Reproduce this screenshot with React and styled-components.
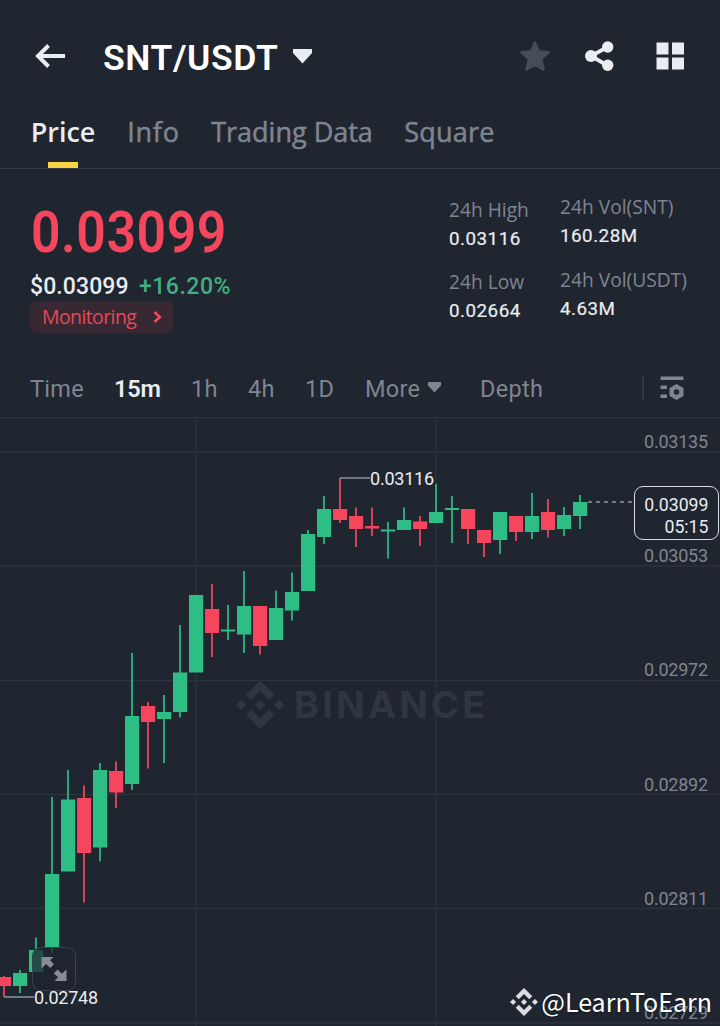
/* 코인 상세 화면
 가격 정보 + 캔들 차트 */

import React from "react";
import styled, { createGlobalStyle } from "styled-components";

const GlobalStyle = createGlobalStyle`
  :root {
    --bg-color: #1f2630;
    --line-color: #2c333d;
    --white-color: #eaecf2;
    --gray-color: #7f8590;
    --red-color: #f6465d;
    --green-color: #2ebd85;
    --point-color: #f5d342;
  }

  * {
    box-sizing: border-box;
  }

  body {
    margin: 0;
    background: var(--bg-color);
    color: var(--white-color);
    font-family: Roboto, "Liberation Sans", sans-serif;
  }
`;

const Page = styled.div`
  width: 720px;
  height: 1026px;
  overflow: hidden;
  display: flex;
  flex-direction: column;
  background: var(--bg-color);
`;

const Header = styled.header`
  height: 112px;
  padding: 0 36px 0 35px;
  display: flex;
  align-items: center;
`;

const Title = styled.h1`
  margin: 3px 14px 0 38px;
  width: 176px;
  font-size: 35.5px;
  font-weight: 600;
  line-height: 40px;
  letter-spacing: 0.6px;
  white-space: nowrap;
  color: #fff;
`;

const HeaderIcons = styled.div`
  margin-left: auto;
  display: grid;
  grid-template-columns: 65px 71px 28px;
  align-items: center;
`;

const Tabs = styled.nav`
  height: 57px;
  padding-left: 31px;
  display: flex;
  gap: 32px;
  border-bottom: 1px solid #343b45;
`;

const Tab = styled.div`
  width: ${props => props.$width}px;
  display: flex;
  flex-direction: column;
  align-items: center;
  justify-content: space-between;
  font-family: "Open Sans", sans-serif;
  font-size: 27px;
  font-weight: ${props => (props.$active ? 600 : 400)};
  line-height: 40px;
  letter-spacing: ${props => props.$spacing || 0}px;
  white-space: nowrap;
  color: ${props => (props.$active ? "var(--white-color)" : "var(--gray-color)")};
  -webkit-text-stroke: ${props => (props.$active ? 0 : 0.5)}px currentColor;

  &::after {
    content: "";
    width: 30px;
    height: 6px;
    background: ${props => (props.$active ? "var(--point-color)" : "transparent")};
  }
`;

const Summary = styled.section`
  height: 190px;
  display: flex;
`;

const PriceBox = styled.div`
  width: 449px;
  padding: 31px 0 0 31px;
  display: flex;
  flex-direction: column;
  align-items: flex-start;
`;

const Price = styled.div`
  height: 66px;
  line-height: 66px;
  font-size: 57.5px;
  font-weight: 600;
  letter-spacing: 0.6px;
  color: var(--red-color);
  transform: scaleX(0.9);
  transform-origin: left;
`;

const SubPrice = styled.div`
  display: flex;
  gap: 11px;
  height: 35px;
  margin-left: -1px;
  line-height: 41px;
  font-size: 23px;
  font-weight: 500;
  white-space: nowrap;

  span {
    width: 98px;
    letter-spacing: 0.1px;
  }
  span + span {
    color: #3fae80;
    letter-spacing: 0.5px;
  }
`;

const Badge = styled.div`
  width: 143px;
  height: 32px;
  margin-left: -1px;
  padding: 0 11px 1px 12px;
  display: flex;
  align-items: center;
  justify-content: space-between;
  border-radius: 7px;
  background: #372831;
  color: #e5485d;
  font-family: "Open Sans", sans-serif;
  font-size: 19.5px;
  letter-spacing: -0.6px;
`;

const Stats = styled.div`
  width: ${props => props.$width}px;
  padding-top: ${props => props.$top}px;
  display: flex;
  flex-direction: column;
`;

const Stat = styled.dl`
  margin: 0;
  height: ${props => props.$height || 72}px;
  white-space: nowrap;

  dt {
    height: 28px;
    line-height: 28px;
    font-family: "Open Sans", sans-serif;
    font-size: 19.2px;
    color: var(--gray-color);
  }
  dd {
    margin: 0;
    line-height: 30px;
    font-size: 18.8px;
    letter-spacing: 0.5px;
    -webkit-text-stroke: 0.2px currentColor;
  }
`;

const Periods = styled.div`
  height: 59px;
  padding: 0 36px 0 30px;
  display: flex;
  align-items: center;
  border-bottom: 1px solid var(--line-color);
`;

const Period = styled.div`
  width: ${props => props.$width}px;
  padding-top: 2px;
  display: flex;
  align-items: center;
  gap: 8px;
  font-size: 23.5px;
  font-weight: ${props => (props.$active ? 600 : 400)};
  letter-spacing: ${props => (props.$active ? -0.2 : 0.3)}px;
  color: ${props => (props.$active ? "var(--white-color)" : "var(--gray-color)")};

  svg {
    margin-bottom: 3px;
  }
`;

const Setting = styled.div`
  margin-left: auto;
  height: 25px;
  padding-left: 16px;
  display: flex;
  align-items: center;
  border-left: 2px solid #303741;
`;

const ChartWrap = styled.main`
  position: relative;
  flex: 1;

  > svg {
    display: block;
  }
`;

const PriceTag = styled.div`
  position: absolute;
  top: 68px;
  right: 1px;
  width: 85px;
  height: 54px;
  padding: 7px 9.5px 0 0;
  border: 1.5px solid #d5d9e0;
  border-radius: 9px;
  background: var(--bg-color);
  text-align: right;
  font-size: 17.7px;
  line-height: 22px;
`;

const ExpandButton = styled.button`
  position: absolute;
  left: 32px;
  top: 529px;
  width: 44px;
  height: 44px;
  padding: 0;
  display: flex;
  align-items: center;
  justify-content: center;
  border: 1.5px solid #3b424c;
  border-radius: 9px;
  background: rgba(31, 38, 48, 0.75);
`;

const Author = styled.div`
  position: absolute;
  right: 8px;
  bottom: 7px;
  display: flex;
  align-items: center;
  gap: 3px;
  font-family: "Noto Sans CJK SC", sans-serif;
  font-size: 25px;
  line-height: 36px;
  color: #fff;
  text-shadow: 0 1px 2px rgba(0, 0, 0, 0.5);

  svg {
    margin-top: 2px;
  }
`;

// [몸통 위, 몸통 아래, 고가, 저가, 상승 여부]
const candles = [
  [977, 986, 976, 997, 0],
  [973, 986, 970, 993, 1],
  [950, 972, 937.5, 972, 1],
  [874, 947, 797, 953, 1],
  [799.5, 871.5, 770, 871, 1],
  [798, 853, 785.5, 902.5, 0],
  [770, 847.5, 763, 861.5, 1],
  [771, 792.5, 761.5, 808, 0],
  [716, 784, 653, 790, 1],
  [706, 722, 702, 768.5, 0],
  [712, 719, 695, 763, 1],
  [672.5, 712, 625, 717.5, 1],
  [595, 672.5, 595, 672, 1],
  [609, 633, 584, 657, 0],
  [629.5, 631.5, 605, 640, 1],
  [606, 634.5, 571, 653, 1],
  [606, 646, 606, 654.5, 0],
  [608, 640, 590.5, 640, 1],
  [592, 610.5, 572.5, 620.5, 1],
  [534, 591, 530, 591, 1],
  [509, 537, 496, 544, 1],
  [509, 520, 478, 523, 0],
  [516, 529, 507.5, 547, 0],
  [526, 528.5, 507.5, 536, 0],
  [529.5, 531.5, 522, 558.5, 1],
  [520, 530, 507.5, 530, 1],
  [521.5, 529, 516, 546, 0],
  [512, 523, 484, 523, 1],
  [508, 510, 496, 543, 1],
  [509, 529, 509, 544, 0],
  [530, 543, 530, 557, 0],
  [512, 540, 512, 554, 1],
  [516, 532, 516, 541, 0],
  [516, 532, 493, 539, 1],
  [512, 530, 499, 537.5, 0],
  [515, 529, 507, 536, 1],
  [502, 516, 495, 529, 1],
];

// [가격, 글자 y, 선 y]
const axis = [
  ["0.03135", 448, 452],
  ["0.03053", 562, 566],
  ["0.02972", 676, 680.5],
  ["0.02892", 791, 794.5],
  ["0.02811", 905, 908.5],
  ["0.02729", 1019, 1023],
];

const AxisText = styled.text`
  font-size: 18px;
  fill: ${props => (props.$light ? "var(--white-color)" : "#7f8590")};
`;

const BrandText = styled.text`
  font-family: Inter, sans-serif;
  font-size: 37.5px;
  font-weight: 700;
  fill: #2f3640;
`;

/* 다이아몬드 로고, 24x24 */
const LogoPath = () => (
  <path d="M12 0 19.1 7.1 16.5 9.7 12 5.2 7.5 9.7 4.9 7.1ZM2.6 9.4 5.2 12 2.6 14.6 0 12ZM12 9.4 14.6 12 12 14.6 9.4 12ZM21.4 9.4 24 12 21.4 14.6 18.8 12ZM7.5 14.3 12 18.8 16.5 14.3 19.1 16.9 12 24 4.9 16.9Z" />
);

const Candle = ({ x, item }) => {
  const [top, bottom, high, low, up] = item;
  const color = up ? "var(--green-color)" : "var(--red-color)";
  return (
    <g fill={color}>
      <rect x={x - 1} y={high} width="2" height={low - high} opacity="0.85" />
      <rect x={x - 7} y={top} width="14.2" height={bottom - top} />
    </g>
  );
};

const Chart = () => (
  <svg width="720" height="608" viewBox="0 418 720 608">
    <g stroke="#2c333d" strokeWidth="1.3">
      {axis.map(([label, , y]) => (
        <line key={label} x1="0" x2="720" y1={y} y2={y} />
      ))}
      <line x1="196" x2="196" y1="418" y2="1026" />
      <line x1="436" x2="436" y1="418" y2="1026" />
    </g>
    <g transform="translate(236 680.5) scale(2.02)" fill="#2f3640">
      <LogoPath />
    </g>
    <BrandText x="294" y="718" textLength="191">
      BINANCE
    </BrandText>
    {candles.map((item, k) => (
      <Candle key={k} x={4 + k * 16} item={item} />
    ))}
    {axis.map(([label, y]) => (
      <AxisText key={label} x="644" y={y} textLength="64">
        {label}
      </AxisText>
    ))}
    <path d="M340 478H370M4 997H34" stroke="#8d939d" strokeWidth="1.5" />
    <AxisText $light x="370" y="485" textLength="64">
      0.03116
    </AxisText>
    <AxisText $light x="34" y="1004" textLength="64">
      0.02748
    </AxisText>
    <path d="M588 502H634" stroke="#9297a0" strokeWidth="1.5" strokeDasharray="4 4" />
  </svg>
);

const App = () => {
  return (
    <Page>
      <GlobalStyle />
      <Header>
        <svg width="30" height="26" viewBox="0 0 30 26" fill="none" stroke="#eaecf2" strokeWidth="4">
          <path d="M30 13H3M13.5 2.5 3 13 13.5 23.5" />
        </svg>
        <Title>SNT/USDT</Title>
        <svg width="19" height="15" viewBox="0 0 19 15" fill="#eaecf2">
          <path d="M0 0H19V4L9.5 14.5 0 4Z" />
        </svg>
        <HeaderIcons>
          <svg width="30" height="30" viewBox="0 0 30 30" fill="#474d58">
            <path
              d="M15 1.5 18.8 10.4 28.6 11.3 21.2 17.8 23.6 28.6 15 23.8 6.4 28.6 8.8 17.8 1.4 11.3 11.2 10.4Z"
              stroke="#474d58"
              strokeWidth="2.4"
              strokeLinejoin="round"
            />
          </svg>
          <svg width="30" height="30" viewBox="0 0 30 30" fill="#eaecf2">
            <path d="M22.5 6 6 15 22.5 24.5" fill="none" stroke="#eaecf2" strokeWidth="3.8" />
            <circle cx="22.7" cy="6" r="5.7" />
            <circle cx="6" cy="15" r="6" />
            <circle cx="22.7" cy="24.3" r="5.7" />
          </svg>
          <svg width="28" height="28" viewBox="0 0 28 28" fill="#eaecf2">
            <path d="M.5.5H12.5V12.5H.5ZM16 .5H28V12.5H16ZM.5 15.5H12.5V27.5H.5ZM16 15.5H28V27.5H16Z" />
          </svg>
        </HeaderIcons>
      </Header>

      <Tabs>
        <Tab $width={64} $active>
          Price
        </Tab>
        <Tab $width={53} $spacing={0.8}>
          Info
        </Tab>
        <Tab $width={160}>Trading Data</Tab>
        <Tab $width={91} $spacing={0.2}>
          Square
        </Tab>
      </Tabs>

      {/* 현재가 */}
      <Summary>
        <PriceBox>
          <Price>0.03099</Price>
          <SubPrice>
            <span>$0.03099</span>
            <span>+16.20%</span>
          </SubPrice>
          <Badge>
            Monitoring
            <svg width="9" height="12" viewBox="0 0 9 12" fill="none" stroke="#f6465d" strokeWidth="2.6">
              <path d="M1.5 1 6.8 6 1.5 11" />
            </svg>
          </Badge>
        </PriceBox>
        <Stats $width={111} $top={27}>
          <Stat>
            <dt>24h High</dt>
            <dd>0.03116</dd>
          </Stat>
          <Stat>
            <dt>24h Low</dt>
            <dd>0.02664</dd>
          </Stat>
        </Stats>
        <Stats $width={150} $top={24}>
          <Stat $height={73}>
            <dt>24h Vol(SNT)</dt>
            <dd>160.28M</dd>
          </Stat>
          <Stat>
            <dt>24h Vol(USDT)</dt>
            <dd>4.63M</dd>
          </Stat>
        </Stats>
      </Summary>

      {/* 차트 기간 */}
      <Periods>
        <Period $width={84}>Time</Period>
        <Period $width={77} $active>
          15m
        </Period>
        <Period $width={57}>1h</Period>
        <Period $width={57}>4h</Period>
        <Period $width={60}>1D</Period>
        <Period $width={115}>
          More
          <svg width="13" height="11" viewBox="0 0 13 11" fill="#7f8590">
            <path d="M0 0H13V3.5L6.5 10.5 0 3.5Z" />
          </svg>
        </Period>
        <Period $width={70}>Depth</Period>
        <Setting>
          <svg width="24" height="24" viewBox="0 0 24 24" fill="#7f8590">
            <path d="M.5.5H23.5V4H.5ZM.5 9.5H7V13H.5ZM.5 18.5H7V22H.5Z" />
            <path
              fillRule="evenodd"
              d="M16.5 8 23.5 12V20L16.5 24 9.5 20V12ZM16.5 13.2A2.8 2.8 0 1 0 16.5 18.8 2.8 2.8 0 1 0 16.5 13.2Z"
            />
          </svg>
        </Setting>
      </Periods>

      <ChartWrap>
        <Chart />
        <PriceTag>
          0.03099
          <br />
          05:15
        </PriceTag>
        <ExpandButton>
          <svg width="26" height="26" viewBox="0 0 26 26" fill="#878c96">
            <path d="M.5 1H12.5L9 4.3 13 8.3 9.2 12 5 8 .5 12.5ZM25.5 25H13.5L17 21.3 12.8 17.3 16.6 13.6 20.8 17.8 25.5 13.5Z" />
          </svg>
        </ExpandButton>
        <Author>
          <svg width="28" height="28" viewBox="0 0 24 24" fill="#d9dce0">
            <LogoPath />
          </svg>
          @LearnToEarn
        </Author>
      </ChartWrap>
    </Page>
  );
};
export default App;
